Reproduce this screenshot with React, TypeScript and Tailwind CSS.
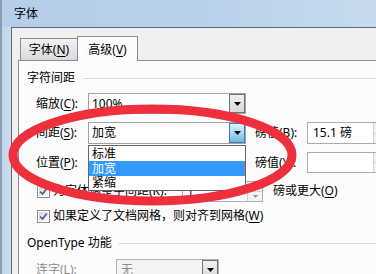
import React from "react";

function U({ c }: { c: string }) {
  return <span className="underline underline-offset-[2px] decoration-[1px]">{c}</span>;
}

function Tri({ color = "#000" }: { color?: string }) {
  return (
    <svg width="7" height="4" viewBox="0 0 7 4">
      <path d="M0 0h7L3.5 4z" fill={color} />
    </svg>
  );
}

function Check() {
  return (
    <span className="w-[13px] h-[13px] shrink-0 border border-[#8e8f8f] bg-white p-px">
      <span className="w-full h-full flex items-center justify-center bg-gradient-to-br from-[#d6d6d6] to-[#fafafa]">
        <svg width="9" height="9" viewBox="0 0 9 9">
          <path d="M1.2 4.6 L3.6 7 L7.8 1.6" stroke="#4a5d96" strokeWidth="1.7" fill="none" />
        </svg>
      </span>
    </span>
  );
}

function Spin() {
  return (
    <div className="w-[15px] shrink-0 flex flex-col border-l border-[#d3d3d3]">
      <div className="flex-1 flex items-center justify-center bg-[#f3f3f3] border-b border-[#d3d3d3]">
        <svg width="5" height="3" viewBox="0 0 5 3"><path d="M0 3h5L2.5 0z" fill="#b7c0d0" /></svg>
      </div>
      <div className="flex-1 flex items-center justify-center bg-[#f3f3f3]">
        <svg width="5" height="3" viewBox="0 0 5 3"><path d="M0 0h5L2.5 3z" fill="#7d8fc0" /></svg>
      </div>
    </div>
  );
}

export default function App() {
  return (
    <div className="w-[376px] h-[274px] overflow-hidden relative bg-[#f0f0f0] text-[12px] leading-[16px] text-black font-['Noto_Sans','Noto_Sans_CJK_SC',sans-serif]">
      {/* title bar */}
      <div className="h-[27px] flex items-center pl-[12px] border-l-2 border-[#8b9bb0] bg-gradient-to-r from-[#b6cee9] via-[#b8d0ea] to-[#c8dbee]">
        字体
      </div>

      <div className="flex h-[247px]">
        {/* window frame */}
        <div className="w-[11px] shrink-0 border-l-2 border-[#8b9bb0] bg-gradient-to-r from-[#c2d4e8] to-[#cadcee]" />

        {/* client */}
        <div className="flex-1 min-w-0 border-t border-l border-[#5d6876] bg-[#f0f0f0] pl-[6px] pt-[8px] flex flex-col">
          {/* tabs */}
          <div className="flex items-end h-[25px] pl-[2px] relative z-10">
            <div className="w-[57px] h-[22px] mb-px border border-r-0 border-b-0 border-[#898c95] bg-gradient-to-b from-[#f2f2f2] to-[#dadada] flex items-center justify-center">
              字体(<U c="N" />)
            </div>
            <div className="w-[61px] h-[25px] border border-b-0 border-[#898c95] bg-[#fcfcfc] flex items-center justify-center pt-[2px]">
              高级(<U c="V" />)
            </div>
          </div>

          {/* panel */}
          <div className="-mt-px flex-1 border-t border-l border-[#898c95] bg-[#fcfcfc] pl-[8px] flex flex-col">
            {/* 字符间距 */}
            <div className="mt-[9px] h-[16px] flex items-center">
              <span>字符间距</span>
              <div className="flex-1 h-px bg-[#d5dfe5] ml-[8px]" />
            </div>

            {/* 缩放 */}
            <div className="mt-[7px] h-[21px] flex items-center pl-[9px]">
              <span className="w-[52px] shrink-0">
                缩放(<U c="C" />):
              </span>
              <div className="w-[158px] h-[21px] shrink-0 border border-[#a3a3a3] bg-white flex items-center">
                <span className="flex-1 pl-[3px]">100%</span>
                <div className="w-[16px] h-full border border-[#707070] bg-gradient-to-b from-[#f2f2f2] to-[#d8d8d8] flex items-center justify-center">
                  <Tri />
                </div>
              </div>
            </div>

            {/* 间距 */}
            <div className="mt-[8px] h-[22px] flex items-center pl-[9px]">
              <span className="w-[52px] shrink-0">
                间距(<U c="S" />):
              </span>
              <div className="w-[158px] h-[22px] shrink-0 border border-[#a3a3a3] bg-white flex items-center relative">
                <span className="flex-1 pl-[3px]">加宽</span>
                <div className="w-[16px] h-full border border-[#3c7fb1] bg-gradient-to-b from-[#def1fc] via-[#a9d8f5] to-[#6cb6e3] flex items-center justify-center">
                  <Tri />
                </div>
                {/* dropdown list */}
                <div className="absolute left-[-1px] top-[22px] w-[158px] h-[46px] border border-[#646464] bg-white z-20 flex flex-col leading-[14px]">
                  <div className="h-[15px] pl-[3px] flex items-center">标准</div>
                  <div className="h-[15px] pl-[3px] flex items-center bg-[#3399ff] text-white border-r border-dotted border-[#d08040]">
                    加宽
                  </div>
                  <div className="h-[14px] pl-[3px] flex items-center">紧缩</div>
                </div>
              </div>
              <span className="w-[52px] shrink-0 ml-[9px]">
                磅值(<U c="B" />):
              </span>
              <div className="w-[82px] h-[22px] shrink-0 border border-[#abadb3] bg-white flex">
                <span className="flex-1 pl-[5px] flex items-center">15.1 磅</span>
                <Spin />
              </div>
            </div>

            {/* 位置 */}
            <div className="mt-[8px] h-[21px] flex items-center pl-[9px]">
              <span className="w-[52px] shrink-0">
                位置(<U c="P" />):
              </span>
              <div className="w-[158px] h-[21px] shrink-0 border border-[#a3a3a3] bg-white" />
              <span className="w-[52px] shrink-0 ml-[9px]">
                磅值(<U c="Y" />):
              </span>
              <div className="w-[82px] h-[21px] shrink-0 border border-[#abadb3] bg-white flex justify-end">
                <Spin />
              </div>
            </div>

            {/* 为字体调整字间距 */}
            <div className="mt-[7px] h-[22px] flex items-center pl-[10px]">
              <Check />
              <span className="w-[132px] shrink-0 pl-[3px]">
                为字体调整字间距(<U c="K" />):
              </span>
              <div className="w-[81px] h-[21px] shrink-0 border border-[#abadb3] bg-white flex">
                <span className="flex-1 pl-[4px] flex items-center">1</span>
                <Spin />
              </div>
              <span className="ml-[10px]">
                磅或更大(<U c="O" />)
              </span>
            </div>

            {/* 如果定义了文档网格 */}
            <div className="mt-[6px] h-[16px] flex items-center pl-[10px]">
              <Check />
              <span className="pl-[3px]">
                如果定义了文档网格，则对齐到网格(<U c="W" />)
              </span>
            </div>

            {/* OpenType 功能 */}
            <div className="mt-[11px] h-[16px] flex items-center">
              <span>OpenType 功能</span>
              <div className="flex-1 h-px bg-[#d5dfe5] ml-[6px]" />
            </div>

            {/* 连字 */}
            <div className="mt-[8px] h-[21px] flex items-center pl-[9px]">
              <span className="w-[80px] shrink-0 text-[#8d8d8d]">
                连字(<U c="L" />):
              </span>
              <div className="w-[103px] h-[21px] shrink-0 border border-[#adb2b5] bg-[#f4f4f4] flex items-center">
                <span className="flex-1 pl-[4px] text-[#8d8d8d]">无</span>
                <div className="w-[16px] h-full border border-[#707070] bg-gradient-to-b from-[#f2f2f2] to-[#d8d8d8] flex items-center justify-center">
                  <Tri />
                </div>
              </div>
            </div>
          </div>
        </div>
      </div>

      {/* red annotation ellipse */}
      <svg className="absolute left-0 top-0 z-30 pointer-events-none" width="376" height="274" viewBox="0 0 376 274">
        <ellipse cx="152.5" cy="155" rx="139.5" ry="46" fill="none" stroke="#ee2f3c" strokeWidth="9" />
      </svg>
    </div>
  );
}
